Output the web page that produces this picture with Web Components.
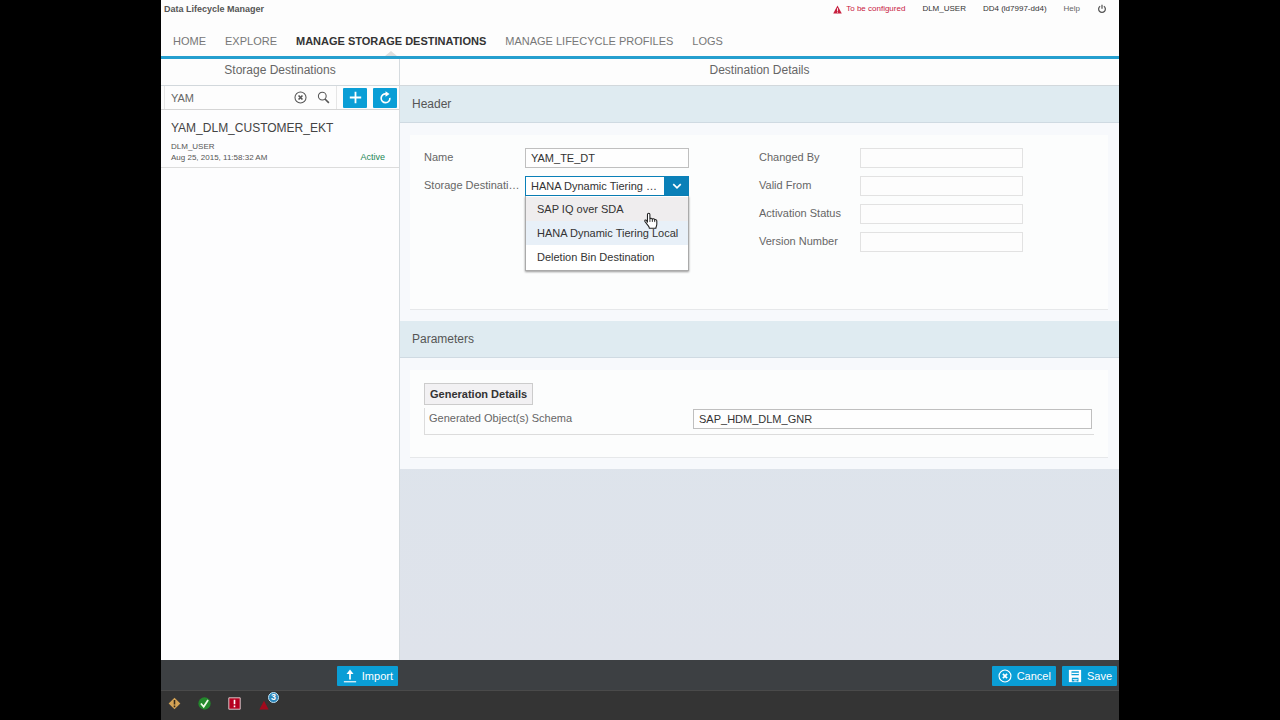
<!DOCTYPE html>
<html lang="en">
<head>
<meta charset="utf-8">
<title>Data Lifecycle Manager</title>
<style>
  html, body { margin: 0; background: #000; }
  body { font-family: "Liberation Sans", Arial, sans-serif; font-size: 11px; color: #333; }
</style>
</head>
<body>
<dlm-app></dlm-app>

<script>
const define = (name, html, setup) => {
  const template = document.createElement('template');
  template.innerHTML = `<style>*{box-sizing:border-box}:host([hidden]){display:none}</style>${html}`;
  customElements.define(name, class extends HTMLElement {
    constructor() {
      super();
      this.attachShadow({ mode: 'open' }).append(template.content.cloneNode(true));
    }
    connectedCallback() { if (setup) setup(this, this.shadowRoot); }
  });
};

const ICONS = {
  clear: '<circle cx="8" cy="8" r="6.8" fill="none" stroke="currentColor" stroke-width="1.3"/><path d="M5.6 5.6l4.8 4.8M10.4 5.6l-4.8 4.8" stroke="currentColor" stroke-width="2"/>',
  search: '<circle cx="6.5" cy="6.3" r="4.8" fill="none" stroke="currentColor" stroke-width="1.3"/><path d="M9.8 9.8l4.8 4.8" stroke="currentColor" stroke-width="2"/>',
  plus: '<path d="M8 1v14M1 8h14" stroke="currentColor" stroke-width="2.2"/>',
  refresh: '<path d="M13.4 8.400A5.400 5.400 0 1 1 8.600 3.600" fill="none" stroke="currentColor" stroke-width="2"/><path d="M8 .4l5 3.200-5 3.400z" fill="currentColor"/>',
  chevron: '<path d="M3 5.500l5 5 5-5" fill="none" stroke="currentColor" stroke-width="2.200"/>',
  upload: '<path d="M1 14.600h14" stroke="currentColor" stroke-width="1.300"/><path d="M8 12V4" stroke="currentColor" stroke-width="2"/><path d="M8 .6L4 5.800h8z" fill="currentColor"/>',
  save: '<path d="M1 1h14v14H1z" fill="currentColor"/><path d="M4 2.6h8.4v4.6H4zM4.4 10h7.6v4.2H4.4z" fill="#0a9ed6"/><path d="M4 4.2h8.4v1.4H4zM5.4 11.4h5.6v1H5.4zM7 13h3v1.2H7z" fill="currentColor"/>',
  power: '<path d="M5 3.6a5.4 5.4 0 1 0 6 0" fill="none" stroke="currentColor" stroke-width="2"/><path d="M8 1v6.4" stroke="currentColor" stroke-width="2"/>',
  alert: '<path d="M8 1L15.6 15H.4z" fill="currentColor"/><path d="M8 5.6v5M8 11.8v1.8" stroke="#fdfdfd" stroke-width="1.6"/>',
  triangle: '<path d="M8 1L15.4 15H.6z" fill="currentColor"/>',
  warning: '<path d="M8 .8L15.2 8 8 15.2.8 8z" fill="#d3a255"/><path d="M8 3.6v5.6M8 10.6v2" stroke="#33291a" stroke-width="1.9"/>',
  success: '<circle cx="8" cy="8" r="7.6" fill="#23882c"/><path d="M3.6 8l3.4 4 5.4-8.4" fill="none" stroke="#eefbe8" stroke-width="2.2"/>',
  error: '<path d="M1 1h14v14H1z" fill="#b5001f" stroke="#dcc9cc" stroke-width="1.2"/><path d="M8 3.4v5.4M8 10.4v2.2" stroke="#fff" stroke-width="2"/>',
  hand: '<path d="M4.200 9.800V2.400c0-1.700 2.300-1.700 2.300 0v4.200c.3-1.100 2.100-1.100 2.300.3.500-.9 2.100-.7 2.200.5.600-.6 2-.3 2 1v3.200c0 1.600-.9 2.300-.9 3.700H6c0-1.600-1.200-2.400-2.100-3.700L1.800 8.900C1.200 7.600 2.800 7 3.500 8.200z" fill="#fff" stroke="#222" stroke-width="1"/><path d="M6.500 6.600v2.800M8.800 7v2.400M11 7.500v2" stroke="#222" stroke-width=".8"/>'
};

define('ui-icon', `
<style>
  :host { display: inline-flex; flex: none; width: var(--icon-size, 13px); height: var(--icon-size, 13px); }
  svg { width: 100%; height: 100%; }
</style>
<svg viewBox="0 0 16 16" aria-hidden="true"></svg>`,
(host, root) => { root.querySelector('svg').innerHTML = ICONS[host.getAttribute('name')] || ''; });

define('ui-button', `
<style>
  :host { display: inline-flex; flex: none; }
  button { display: flex; align-items: center; justify-content: center; gap: 5px; height: 20px; min-width: 24px;
    padding: 0 5px 0 6px; border: 0; border-radius: 1px; background: #0a9ed6; color: #fff; font: inherit; line-height: 20px; }
  :host([icon-only]) button { padding: 0; }
</style>
<button type="button"><slot></slot></button>`,
(host, root) => {
  const label = host.getAttribute('label');
  if (label) root.querySelector('button').setAttribute('aria-label', label);
});

define('shell-header', `
<style>
  :host { display: flex; align-items: center; justify-content: space-between; height: 18px; padding: 0 12px 0 3px; background: #fdfdfd; }
  h1 { margin: 0; font-size: 9px; line-height: 16px; font-weight: bold; color: #555; }
  .meta { display: flex; align-items: center; gap: 17px; font-size: 8px; line-height: 16px; color: #333; }
  .todo { display: flex; align-items: center; gap: 4px; color: #c8203f; --icon-size: 9px; }
  a { color: #666; text-decoration: none; }
  button { display: flex; padding: 0; border: 0; background: none; color: #555; --icon-size: 10px; }
</style>
<h1>Data Lifecycle Manager</h1>
<div class="meta">
  <span class="todo"><ui-icon name="alert"></ui-icon>To be configured</span>
  <span>DLM_USER</span>
  <span>DD4 (ld7997-dd4)</span>
  <a href="#help">Help</a>
  <button type="button" aria-label="Log off"><ui-icon name="power"></ui-icon></button>
</div>`);

define('shell-nav', `
<style>
  :host { display: block; background: #fdfdfd; border-bottom: 3px solid #259fcf; }
  nav { display: flex; gap: 19px; padding: 0 12px; }
  a { position: relative; padding: 16px 0 8px; line-height: 14px; color: #777; text-decoration: none; white-space: nowrap; }
  a[aria-current] { color: #333; font-weight: bold; }
  a[aria-current]::after { content: ""; position: absolute; left: 50%; bottom: 0; margin-left: -6px;
    border: 6px solid transparent; border-top: 0; border-bottom: 5px solid #dedede; }
</style>
<nav>
  <a href="#home">HOME</a>
  <a href="#explore">EXPLORE</a>
  <a href="#destinations" aria-current="page">MANAGE STORAGE DESTINATIONS</a>
  <a href="#profiles">MANAGE LIFECYCLE PROFILES</a>
  <a href="#logs">LOGS</a>
</nav>`);

define('pane-title', `
<style>
  :host { display: block; border-bottom: 1px solid #d2d8dc; background: #fdfdfd; }
  h2 { margin: 0; padding: 3px 0 7px; font-size: 12px; line-height: 16px; font-weight: normal; text-align: center; color: #666; }
</style>
<h2><slot></slot></h2>`);

define('search-bar', `
<style>
  :host { display: flex; align-items: center; height: 24px; padding: 0 2px 0 3px; gap: 6px; background: #fdfdfd; border-bottom: 1px solid #d5d5d5; }
  form { flex: 1; min-width: 0; display: flex; align-items: center; gap: 10px; height: 23px; padding: 0 6px; border: 0 solid #e6e6e6; border-width: 0 1px; }
  input { flex: 1; min-width: 0; padding: 0; border: 0; outline: 0; background: none; font: inherit; color: #666; }
  form button { display: flex; padding: 0; border: 0; background: none; color: #555; }
</style>
<form role="search">
  <input type="text" aria-label="Search destinations" value="YAM">
  <button type="button" aria-label="Clear"><ui-icon name="clear"></ui-icon></button>
  <button type="button" aria-label="Search"><ui-icon name="search"></ui-icon></button>
</form>
<ui-button icon-only label="Add"><ui-icon name="plus"></ui-icon></ui-button>
<ui-button icon-only label="Refresh"><ui-icon name="refresh"></ui-icon></ui-button>`);

define('destination-item', `
<style>
  :host { display: block; padding: 10px 14px 4px 10px; border-bottom: 1px solid #dcdcdc; }
  .name { font-size: 12px; line-height: 16px; color: #444; }
  .owner { padding-top: 5px; }
  .row { display: flex; justify-content: space-between; }
  .owner, .row { font-size: 8px; line-height: 11px; color: #555; }
  .status { font-size: 9px; color: #1c8656; }
</style>
<div class="name"><slot></slot></div>
<div class="owner"><slot name="owner"></slot></div>
<div class="row"><slot name="date"></slot><span class="status"><slot name="status"></slot></span></div>`);

define('detail-section', `
<style>
  :host { display: block; background: #f7f9fc; padding-bottom: 11px; }
  h3 { margin: 0; padding: 10px 12px; font-size: 12px; line-height: 16px; font-weight: normal; color: #555; background: #dfebf1; border-bottom: 1px solid #cfdae2; }
  .body { margin: 12px 11px 0 10px; padding: 13px 14px 0; background: #fcfdfd; border-bottom: 1px solid #e6e8ea; }
</style>
<h3></h3>
<div class="body"><slot></slot></div>`,
(host, root) => { root.querySelector('h3').textContent = host.getAttribute('heading'); });

define('text-field', `
<style>
  :host { display: grid; grid-template-columns: var(--label-width, 101px) minmax(0, 1fr); height: 20px; }
  label { line-height: 18px; color: #666; white-space: nowrap; }
  input { width: 100%; height: 20px; padding: 0 5px; border: 1px solid #bfbfbf; outline: 0; background: #fefefe; font: inherit; color: #333; }
  input:read-only { border-color: #e2e2e2; background: #fdfdfd; }
</style>
<label for="field"></label><input id="field" type="text">`,
(host, root) => {
  const input = root.querySelector('input');
  root.querySelector('label').textContent = host.getAttribute('label');
  input.value = host.getAttribute('value') || '';
  input.readOnly = host.hasAttribute('readonly');
});

define('select-field', `
<style>
  :host { display: grid; grid-template-columns: var(--label-width, 101px) minmax(0, 1fr); height: 20px; }
  label { line-height: 18px; color: #666; white-space: nowrap; }
  .box { position: relative; display: flex; }
  select { flex: 1; min-width: 0; height: 20px; padding: 0 26px 0 5px; appearance: none; border: 1px solid #0a80b8; border-radius: 0; outline: 0;
    background: #fff; color: #333; font: inherit; overflow: hidden; text-overflow: ellipsis; white-space: nowrap; }
  .arrow { position: absolute; right: 0; top: 0; bottom: 0; width: 25px; display: flex; align-items: center; justify-content: center;
    background: #0a80b8; color: #fff; pointer-events: none; --icon-size: 12px; }
  ul { position: absolute; z-index: 1; left: 0; right: 0; top: 20px; margin: 0; padding: 1px 0; list-style: none; background: #fff;
    border: 1px solid #aaa; border-top: 0; box-shadow: 0 1px 2px #0006; color: #333; }
  li { padding: 4px 11px; line-height: 16px; white-space: nowrap; }
  .hover { background: #efedee; }
  .selected { background: #e8f0f8; }
  .pointer { position: absolute; z-index: 2; left: 118px; top: 36px; --icon-size: 17px; }
</style>
<label for="field">Storage Destinati…</label>
<div class="box">
  <select id="field">
    <option>SAP IQ over SDA</option>
    <option selected>HANA Dynamic Tiering Local</option>
    <option>Deletion Bin Destination</option>
  </select>
  <span class="arrow"><ui-icon name="chevron"></ui-icon></span>
  <ul role="listbox" aria-label="Storage Destination">
    <li role="option" class="hover">SAP IQ over SDA</li>
    <li role="option" class="selected" aria-selected="true">HANA Dynamic Tiering Local</li>
    <li role="option">Deletion Bin Destination</li>
  </ul>
  <ui-icon class="pointer" name="hand"></ui-icon>
</div>`);

define('header-form', `
<style>
  :host { display: grid; grid-template-columns: 265px 264px; column-gap: 70px; min-height: 161px; align-content: start; --label-width: 101px; }
  .column { display: flex; flex-direction: column; gap: 8px; }
</style>
<div class="column">
  <text-field label="Name" value="YAM_TE_DT"></text-field>
  <select-field></select-field>
</div>
<div class="column">
  <text-field label="Changed By" readonly></text-field>
  <text-field label="Valid From" readonly></text-field>
  <text-field label="Activation Status" readonly></text-field>
  <text-field label="Version Number" readonly></text-field>
</div>`);

define('generation-form', `
<style>
  :host { display: block; padding-bottom: 22px; --label-width: 264px; }
  h4 { width: fit-content; margin: 0 0 3px; padding: 1px 5px; font-size: 11px; line-height: 18px; border: 1px solid #ccc; background: #f2f1f3; color: #333; }
  .group { padding: 1px 2px 5px 4px; border: 1px solid #dcdcdc; border-width: 0 0 1px 1px; }
</style>
<h4>Generation Details</h4>
<div class="group"><text-field label="Generated Object(s) Schema" value="SAP_HDM_DLM_GNR"></text-field></div>`);

define('action-bar', `
<style>
  :host { display: grid; grid-template-columns: 239px minmax(0, 1fr); height: 31px; background: #3d4043; border-bottom: 1px solid #4a4a4a; --icon-size: 14px; }
  div { display: flex; justify-content: flex-end; align-items: center; gap: 6px; padding: 2px 2px 0 0; }
  div:first-child { border-right: 1px solid #54575a; }
</style>
<div><ui-button><ui-icon name="upload"></ui-icon>Import</ui-button></div>
<div>
  <ui-button><ui-icon name="clear"></ui-icon>Cancel</ui-button>
  <ui-button><ui-icon name="save"></ui-icon>Save</ui-button>
</div>`);

define('status-bar', `
<style>
  :host { display: flex; align-items: center; gap: 17px; height: 29px; padding: 0 7px 4px; background: #343434; }
  .alerts { position: relative; display: flex; color: #a10a1c; --icon-size: 10px; padding: 3px 2px 0 1px; }
  .badge { position: absolute; left: 10px; top: -5px; width: 11px; height: 11px; border-radius: 50%; border: 1px solid #bfe3f5; background: #2b86bb;
    color: #fff; font-size: 9px; line-height: 9px; font-weight: bold; text-align: center; }
</style>
<ui-icon name="warning"></ui-icon>
<ui-icon name="success"></ui-icon>
<ui-icon name="error"></ui-icon>
<span class="alerts"><ui-icon name="triangle"></ui-icon><span class="badge">3</span></span>`);

define('dlm-app', `
<style>
  :host { display: flex; flex-direction: column; min-height: 100vh; margin: 0 161px; background: #343434; }
  main { flex: 1; display: grid; grid-template-columns: 239px minmax(0, 1fr); }
  aside { background: #fdfdfe; border-right: 1px solid #d5dbdf; }
  .detail { background: linear-gradient(#dbe5ec, #dfe3eb); }
</style>
<shell-header></shell-header>
<shell-nav></shell-nav>
<main>
  <aside>
    <pane-title>Storage Destinations</pane-title>
    <search-bar></search-bar>
    <destination-item>YAM_DLM_CUSTOMER_EKT
      <span slot="owner">DLM_USER</span>
      <span slot="date">Aug 25, 2015, 11:58:32 AM</span>
      <span slot="status">Active</span>
    </destination-item>
  </aside>
  <section class="detail">
    <pane-title>Destination Details</pane-title>
    <detail-section heading="Header"><header-form></header-form></detail-section>
    <detail-section heading="Parameters"><generation-form></generation-form></detail-section>
  </section>
</main>
<action-bar></action-bar>
<status-bar></status-bar>`);
</script>
</body>
</html>
